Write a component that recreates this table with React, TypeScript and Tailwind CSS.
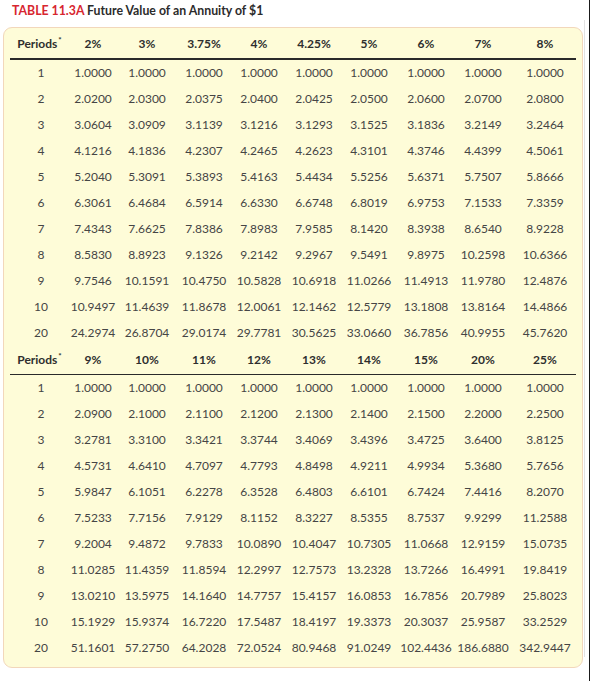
import React from "react";

const h1 = ["2%", "3%", "3.75%", "4%", "4.25%", "5%", "6%", "7%", "8%"];
const t1: [string, string[]][] = [
  ["1", "1.0000 1.0000 1.0000 1.0000 1.0000 1.0000 1.0000 1.0000 1.0000".split(" ")],
  ["2", "2.0200 2.0300 2.0375 2.0400 2.0425 2.0500 2.0600 2.0700 2.0800".split(" ")],
  ["3", "3.0604 3.0909 3.1139 3.1216 3.1293 3.1525 3.1836 3.2149 3.2464".split(" ")],
  ["4", "4.1216 4.1836 4.2307 4.2465 4.2623 4.3101 4.3746 4.4399 4.5061".split(" ")],
  ["5", "5.2040 5.3091 5.3893 5.4163 5.4434 5.5256 5.6371 5.7507 5.8666".split(" ")],
  ["6", "6.3061 6.4684 6.5914 6.6330 6.6748 6.8019 6.9753 7.1533 7.3359".split(" ")],
  ["7", "7.4343 7.6625 7.8386 7.8983 7.9585 8.1420 8.3938 8.6540 8.9228".split(" ")],
  ["8", "8.5830 8.8923 9.1326 9.2142 9.2967 9.5491 9.8975 10.2598 10.6366".split(" ")],
  ["9", "9.7546 10.1591 10.4750 10.5828 10.6918 11.0266 11.4913 11.9780 12.4876".split(" ")],
  ["10", "10.9497 11.4639 11.8678 12.0061 12.1462 12.5779 13.1808 13.8164 14.4866".split(" ")],
  ["20", "24.2974 26.8704 29.0174 29.7781 30.5625 33.0660 36.7856 40.9955 45.7620".split(" ")],
];
const h2 = ["9%", "10%", "11%", "12%", "13%", "14%", "15%", "20%", "25%"];
const t2: [string, string[]][] = [
  ["1", "1.0000 1.0000 1.0000 1.0000 1.0000 1.0000 1.0000 1.0000 1.0000".split(" ")],
  ["2", "2.0900 2.1000 2.1100 2.1200 2.1300 2.1400 2.1500 2.2000 2.2500".split(" ")],
  ["3", "3.2781 3.3100 3.3421 3.3744 3.4069 3.4396 3.4725 3.6400 3.8125".split(" ")],
  ["4", "4.5731 4.6410 4.7097 4.7793 4.8498 4.9211 4.9934 5.3680 5.7656".split(" ")],
  ["5", "5.9847 6.1051 6.2278 6.3528 6.4803 6.6101 6.7424 7.4416 8.2070".split(" ")],
  ["6", "7.5233 7.7156 7.9129 8.1152 8.3227 8.5355 8.7537 9.9299 11.2588".split(" ")],
  ["7", "9.2004 9.4872 9.7833 10.0890 10.4047 10.7305 11.0668 12.9159 15.0735".split(" ")],
  ["8", "11.0285 11.4359 11.8594 12.2997 12.7573 13.2328 13.7266 16.4991 19.8419".split(" ")],
  ["9", "13.0210 13.5975 14.1640 14.7757 15.4157 16.0853 16.7856 20.7989 25.8023".split(" ")],
  ["10", "15.1929 15.9374 16.7220 17.5487 18.4197 19.3373 20.3037 25.9587 33.2529".split(" ")],
  ["20", "51.1601 57.2750 64.2028 72.0524 80.9468 91.0249 102.4436 186.6880 342.9447".split(" ")],
];

const cols = "grid grid-cols-[62px_42px_66px_48px_62px_48px_62px_52px_62px_62px]";

function Cell({ children, bold }: { children: React.ReactNode; bold?: boolean }) {
  return (
    <div className={"flex justify-center items-center whitespace-nowrap " + (bold ? "font-bold text-[#2e2e2e]" : "")}>
      {children}
    </div>
  );
}

function Section({ headers, rows }: { headers: string[]; rows: [string, string[]][] }) {
  return (
    <div>
      <div className={cols + " h-[28px] text-[12px]"}>
        <div className="flex justify-center items-center whitespace-nowrap font-bold text-[#2e2e2e] pr-[3px]">
          Periods<span className="text-[8px] relative -top-[4px] ml-[1px]">*</span>
        </div>
        {headers.map((h) => (
          <Cell key={h} bold>
            {h}
          </Cell>
        ))}
      </div>
      <div className="h-[1.5px] bg-[#2a2a2a]" />
      {rows.map(([p, vals]) => (
        <div key={p} className={cols + " h-[26px] text-[12px]"}>
          <Cell>{p}</Cell>
          {vals.map((v, i) => (
            <Cell key={i}>{v}</Cell>
          ))}
        </div>
      ))}
    </div>
  );
}

export default function App() {
  return (
    <div className="w-[590px] h-[681px] bg-white flex font-['Lato',sans-serif] text-[#454545] overflow-hidden">
      <div className="w-[584px] flex flex-col">
        <div className="pt-[2px] pl-[12px] h-[27px] text-[12.3px] leading-[17px] font-bold text-[#2b2b2b]">
          <span className="text-[#d7262f]">TABLE 11.3A</span> Future Value of an Annuity of $1
        </div>
        <div className="ml-[3px] w-[580px] border border-[#f2d7bb] rounded-[9px] bg-[#fefcd8] px-[6px] pt-[2px] pb-[6px]">
          <Section headers={h1} rows={t1} />
          <Section headers={h2} rows={t2} />
        </div>
      </div>
      <div className="w-px bg-[#e2e2e2] mt-[20px] mb-[24px]" />
      <div className="w-[4px]" />
      <div className="w-px bg-[#1a1a1a]" />
    </div>
  );
}
